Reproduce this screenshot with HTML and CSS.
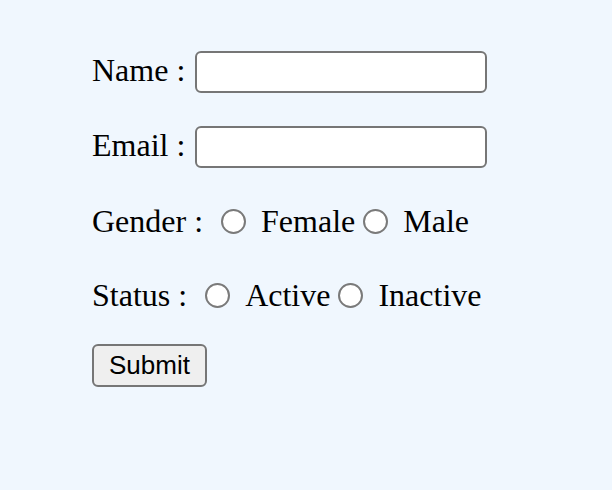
FILE: index.html
```html
<!DOCTYPE html>
<html lang="en">
<head>
<meta charset="utf-8">
<title>Form</title>
<link rel="stylesheet" href="styles.css">
</head>
<body>
<form class="form">
  <div class="row text-row">
    <span class="label">Name :</span>
    <input class="field" type="text" name="name">
  </div>
  <div class="row text-row">
    <span class="label">Email :</span>
    <input class="field" type="text" name="email">
  </div>
  <div class="row radio-row">
    <span class="label">Gender :</span>
    <input class="radio first" type="radio" name="gender">
    <span class="opt">Female</span>
    <input class="radio" type="radio" name="gender">
    <span class="opt">Male</span>
  </div>
  <div class="row radio-row">
    <span class="label">Status :</span>
    <input class="radio first" type="radio" name="status">
    <span class="opt">Active</span>
    <input class="radio" type="radio" name="status">
    <span class="opt">Inactive</span>
  </div>
  <div class="button-row">
    <button class="submit" type="button">Submit</button>
  </div>
</form>
</body>
</html>
```

FILE: styles.css
```css
html, body {
  margin: 0;
  padding: 0;
  background: #f0f7fe;
}

body {
  width: 612px;
  height: 490px;
  overflow: hidden;
  font-family: "Liberation Serif", "Times New Roman", serif;
  font-size: 32px;
  color: #000;
}

.form {
  display: flex;
  flex-direction: column;
  padding: 51px 0 0 92px;
}

.row {
  display: flex;
  align-items: center;
  height: 42px;
  white-space: pre;
}

.row:nth-child(1) { margin-bottom: 33px; }
.row:nth-child(2) { margin-bottom: 32px; }
.row:nth-child(3) { margin-bottom: 32px; }
.row:nth-child(4) { margin-bottom: 28px; }

.text-row .label {
  margin-bottom: 3px;
}

.field {
  box-sizing: border-box;
  width: 292px;
  height: 42px;
  margin: 0 0 0 10px;
  padding: 0 6px;
  border: 2px solid #767676;
  border-radius: 6px;
  background: #fff;
  font-size: 26px;
}

.radio {
  appearance: none;
  -webkit-appearance: none;
  box-sizing: border-box;
  width: 25px;
  height: 25px;
  margin: 0 15px 0 8px;
  border: 2px solid #7a7a7a;
  border-radius: 50%;
  background: #fff;
}

.radio.first {
  margin-left: 18px;
}

.button-row {
  display: flex;
}

.submit {
  box-sizing: border-box;
  width: 115px;
  height: 43px;
  margin: 0;
  padding: 0;
  border: 2px solid #767676;
  border-radius: 6px;
  background: #efefef;
  font-family: "Liberation Sans", Arial, sans-serif;
  font-size: 26px;
  color: #000;
}
```
